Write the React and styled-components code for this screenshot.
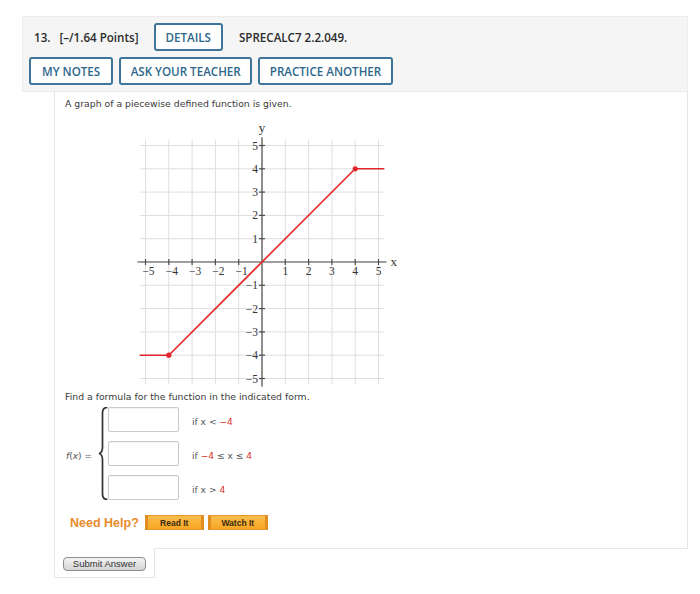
import React from 'react';
import styled, { createGlobalStyle } from 'styled-components';

const GlobalStyle = createGlobalStyle`
  body {
    margin: 0;
    background: #ffffff;
    font-family: "DejaVu Sans", Verdana, sans-serif;
  }
`;

const Page = styled.div`
  width: 700px;
  height: 594px;
  padding-top: 16px;
  box-sizing: border-box;
`;

const Header = styled.div`
  margin-left: 22px;
  width: 666px;
  box-sizing: border-box;
  background: #f5f5f5;
  border: 1px solid #ececec;
  padding: 6px 6px 6px 6px;
  font-family: "Open Sans", sans-serif;
`;

const Row = styled.div`
  display: flex;
  align-items: center;
  gap: ${p => p.gap || 6}px;
  margin-top: ${p => p.top || 0}px;
`;

const Title = styled.span`
  font-size: 11.6px;
  font-weight: 600;
  color: #2b2b2b;
  margin-left: ${p => p.left || 0}px;
  margin-right: ${p => p.right || 0}px;
`;

const OutlineButton = styled.div`
  height: 28px;
  box-sizing: border-box;
  display: flex;
  align-items: center;
  padding: 0 ${p => p.pad || 11}px;
  border: 2px solid #3f7599;
  border-radius: 3px;
  background: #ffffff;
  color: #2e678b;
  font-size: 11.6px;
  font-weight: 600;
`;

const Panel = styled.div`
  margin-left: 54px;
  width: 634px;
  box-sizing: border-box;
  border-left: 1px solid #e6e6e6;
  border-right: 1px solid #e6e6e6;
  padding: 6px 10px 18px 10px;
  background: #fff;
`;

const Prompt = styled.div`
  font-size: 9.3px;
  line-height: 12px;
  color: #3a3a3a;
`;

const GraphBox = styled.div`
  margin: 8px 0 1px 65px;
  width: 270px;
  height: 272px;
`;

const Piecewise = styled.div`
  display: grid;
  grid-template-columns: 32px 10px 71px auto;
  grid-template-rows: repeat(3, 25px);
  row-gap: 9px;
  align-items: center;
  margin-top: 4px;
  margin-left: 1px;
`;

const FnLabel = styled.div`
  grid-row: 1 / 4;
  padding-top: 4px;
  font-size: 9px;
  color: #555;
  white-space: nowrap;
  i { font-style: italic; }
`;

const Brace = styled.svg`
  grid-row: 1 / 4;
  width: 10px;
  height: 93px;
  display: block;
`;

const AnswerBox = styled.div`
  height: 25px;
  box-sizing: border-box;
  border: 1px solid #c9c9c9;
  border-radius: 2px;
  background: #fff;
  box-shadow: inset 0 1px 1px rgba(0, 0, 0, 0.05);
`;

const Cond = styled.div`
  margin-left: 13px;
  padding-top: 4px;
  font-size: 9.1px;
  color: #555;
  white-space: pre;
`;

const Num = styled.span`
  color: #d8322c;
`;

const HelpRow = styled.div`
  display: flex;
  align-items: center;
  margin-top: 15px;
  margin-left: 5px;
  font-family: "Liberation Sans", Arial, sans-serif;
`;

const HelpText = styled.span`
  color: #e98b2c;
  font-weight: bold;
  font-size: 12.5px;
  margin-right: 6px;
`;

const HelpButton = styled.div`
  width: ${p => p.w}px;
  height: 15px;
  box-sizing: border-box;
  margin-right: 4px;
  display: flex;
  align-items: center;
  justify-content: center;
  background: linear-gradient(#fbbd4c, #f6a623);
  border: 1px solid #e7972a;
  border-left: 3px solid #e08d22;
  border-right: 3px solid #e08d22;
  font-size: 8.5px;
  font-weight: bold;
  color: #3a2a10;
`;

const Footer = styled.div`
  display: flex;
  margin-left: 54px;
  width: 634px;
`;

const SubmitTab = styled.div`
  width: 101px;
  box-sizing: border-box;
  border-left: 1px solid #e6e6e6;
  border-right: 1px solid #e6e6e6;
  border-bottom: 1px solid #e6e6e6;
  padding: 9px 8px 6px 8px;
`;

const Filler = styled.div`
  flex: 1;
  border-top: 1px solid #e6e6e6;
`;

const SubmitButton = styled.div`
  width: 83px;
  height: 14px;
  box-sizing: border-box;
  border: 1px solid #8e8e8e;
  border-radius: 4px;
  background: linear-gradient(#f4f4f4, #d4d4d4);
  font-family: "Liberation Sans", Arial, sans-serif;
  font-size: 9.5px;
  line-height: 12px;
  text-align: center;
  color: #333;
`;

const U = 23.3;
const OX = 132;
const OY = 144;
const px = v => OX + v * U;
const py = v => OY - v * U;
const ticks = [-5, -4, -3, -2, -1, 1, 2, 3, 4, 5];
const fmt = n => (n < 0 ? '\u2212' + Math.abs(n) : String(n));

function Graph() {
  const lim = 5.25;
  return (
    <svg width="270" height="272" viewBox="0 0 270 272">
      {[-5, -4, -3, -2, -1, 0, 1, 2, 3, 4, 5].map(i => (
        <g key={i} stroke="#dedede" strokeWidth="1">
          <line x1={px(i)} y1={py(lim)} x2={px(i)} y2={py(-lim)} />
          <line x1={px(-lim)} y1={py(i)} x2={px(lim)} y2={py(i)} />
        </g>
      ))}
      <g stroke="#4d4d4d" strokeWidth="1.2">
        <line x1={px(-5.35)} y1={OY} x2={px(5.35)} y2={OY} />
        <line x1={OX} y1={py(5.35)} x2={OX} y2={py(-5.35)} />
        {ticks.map(i => (
          <g key={i}>
            <line x1={px(i)} y1={OY - 3} x2={px(i)} y2={OY + 3} />
            <line x1={OX - 3} y1={py(i)} x2={OX + 3} y2={py(i)} />
          </g>
        ))}
      </g>
      <g fontFamily='"Liberation Serif", "Times New Roman", serif' fontSize="11.5" fill="#333">
        {ticks.map(i => (
          <text key={'x' + i} x={i < 0 ? px(i) + 3 : px(i)} y={OY + 13} textAnchor="middle">
            {fmt(i)}
          </text>
        ))}
        {ticks.map(i => (
          <text key={'y' + i} x={OX - 4} y={py(i) + 4} textAnchor="end">
            {fmt(i)}
          </text>
        ))}
        <text x={OX} y={py(5.35) - 5} textAnchor="middle" fontSize="13">y</text>
        <text x={px(5.65)} y={OY + 4} textAnchor="middle" fontSize="13">x</text>
      </g>
      <g stroke="#e3262b" strokeWidth="1.6" fill="none">
        <polyline points={`${px(-lim)},${py(-4)} ${px(-4)},${py(-4)} ${px(4)},${py(4)} ${px(lim)},${py(4)}`} />
      </g>
      <circle cx={px(-4)} cy={py(-4)} r="2.6" fill="#e3262b" />
      <circle cx={px(4)} cy={py(4)} r="2.6" fill="#e3262b" />
    </svg>
  );
}

export default function App() {
  return (
    <Page>
      <GlobalStyle />
      <Header>
        <Row gap={0}>
          <Title left={5} right={3}>13.</Title>
          <Title right={9}>[–/1.64 Points]</Title>
          <OutlineButton pad={10}>DETAILS</OutlineButton>
          <Title left={10}>SPRECALC7 2.2.049.</Title>
        </Row>
        <Row top={6}>
          <OutlineButton pad={11}>MY NOTES</OutlineButton>
          <OutlineButton pad={9.5}>ASK YOUR TEACHER</OutlineButton>
          <OutlineButton pad={9.5}>PRACTICE ANOTHER</OutlineButton>
        </Row>
      </Header>
      <Panel>
        <Prompt>A graph of a piecewise defined function is given.</Prompt>
        <GraphBox>
          <Graph />
        </GraphBox>
        <Prompt>Find a formula for the function in the indicated form.</Prompt>
        <Piecewise>
          <FnLabel>
            <i>f</i>(<i>x</i>) =
          </FnLabel>
          <Brace viewBox="0 0 10 93">
            <path
              d="M9.5 0.5 C5.5 0.5 4.5 2.5 4.5 6 L4.5 40 C4.5 44 3.5 46 1 46.5 C3.5 47 4.5 49 4.5 53 L4.5 87 C4.5 90.5 5.5 92.5 9.5 92.5"
              fill="none"
              stroke="#333"
              strokeWidth="1.7"
            />
          </Brace>
          <AnswerBox style={{ gridRow: 1, gridColumn: 3 }} />
          <Cond style={{ gridRow: 1, gridColumn: 4 }}>
            if x &lt; <Num>−4</Num>
          </Cond>
          <AnswerBox style={{ gridRow: 2, gridColumn: 3 }} />
          <Cond style={{ gridRow: 2, gridColumn: 4 }}>
            if <Num>−4</Num> ≤ x ≤ <Num>4</Num>
          </Cond>
          <AnswerBox style={{ gridRow: 3, gridColumn: 3 }} />
          <Cond style={{ gridRow: 3, gridColumn: 4 }}>
            if x &gt; <Num>4</Num>
          </Cond>
        </Piecewise>
        <HelpRow>
          <HelpText>Need Help?</HelpText>
          <HelpButton w={59}>Read It</HelpButton>
          <HelpButton w={60}>Watch It</HelpButton>
        </HelpRow>
      </Panel>
      <Footer>
        <SubmitTab>
          <SubmitButton>Submit Answer</SubmitButton>
        </SubmitTab>
        <Filler />
      </Footer>
    </Page>
  );
}
